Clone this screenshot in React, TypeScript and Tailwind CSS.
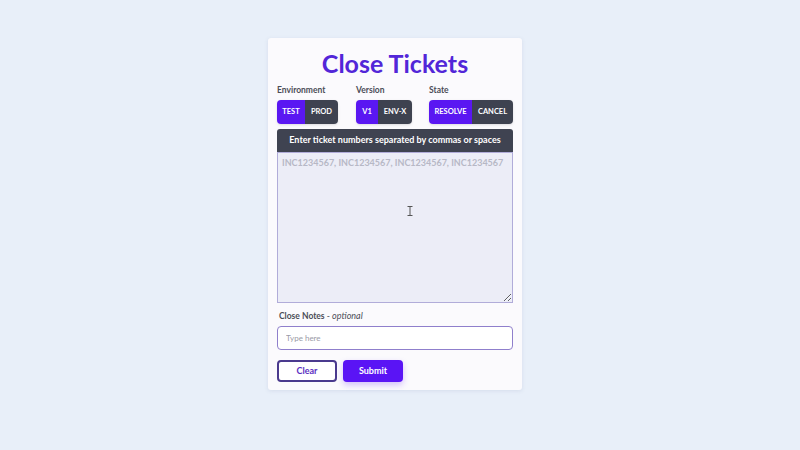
import React from "react";

type Opt = { label: string; active?: boolean; w: string };

const Toggle: React.FC<{ title: string; options: Opt[]; className?: string }> = ({
  title,
  options,
  className = "",
}) => (
  <div className={`flex flex-col ${className}`}>
    <p className="text-[8.5px] font-bold text-[#4b4d57] leading-none mb-[5px]">{title}</p>
    <div className="flex h-6 rounded-[4px] overflow-hidden shadow-sm">
      {options.map((o) => (
        <button
          key={o.label}
          className={`${o.w} ${
            o.active ? "bg-[#5a17f2]" : "bg-[#3e4250]"
          } text-white text-[7.5px] font-bold flex items-center justify-center`}
        >
          {o.label}
        </button>
      ))}
    </div>
  </div>
);

export default function App() {
  return (
    <div
      className="w-full h-[450px] bg-[#e8eff9] flex justify-center pt-[38px] pr-[10px]"
      style={{ fontFamily: "Lato, 'Open Sans', sans-serif" }}
    >
      <div className="w-[254px] h-[352px] bg-[#fbfafd] rounded-[3px] shadow-[0_1px_4px_rgba(80,90,140,0.12)] px-[9px] flex flex-col">
        <h1 className="text-center text-[25px] font-bold text-[#5226d8] leading-none mt-[13px]">
          Close Tickets
        </h1>
        <div className="flex gap-[17px] mt-[10px]">
          <Toggle
            title="Environment"
            options={[
              { label: "TEST", active: true, w: "w-[28px]" },
              { label: "PROD", w: "w-[33px]" },
            ]}
          />
          <Toggle
            title="Version"
            className="ml-[1px]"
            options={[
              { label: "V1", active: true, w: "w-[22px]" },
              { label: "ENV-X", w: "w-[34px]" },
            ]}
          />
          <Toggle
            title="State"
            options={[
              { label: "RESOLVE", active: true, w: "w-[43px]" },
              { label: "CANCEL", w: "w-[41px]" },
            ]}
          />
        </div>
        <div className="mt-[5px] flex flex-col">
          <div className="h-[23px] bg-[#3f4351] rounded-t-[3px] flex items-center justify-center text-white text-[9px] font-bold">
            Enter ticket numbers separated by commas or spaces
          </div>
          <div className="relative">
            <textarea
              className="w-full h-[151px] block resize-y bg-[#ecedf7] border border-[#b1acd9] px-[4px] py-[3px] text-[9px] font-bold text-[#555] placeholder:text-[#b7b8c6] outline-none"
              placeholder="INC1234567, INC1234567, INC1234567, INC1234567"
            />
            <svg
              className="absolute left-[130px] top-[54px]"
              width="6"
              height="10"
              viewBox="0 0 6 10"
            >
              <path
                d="M0.5 0.5h5M3 0.5v9M0.5 9.5h5"
                stroke="#555"
                strokeWidth="1"
                fill="none"
              />
            </svg>
          </div>
        </div>
        <p className="text-[8.5px] text-[#4b4d57] mt-[8px] ml-[2px] leading-none">
          <span className="font-bold">Close Notes</span> -{" "}
          <span className="italic text-[9px]">optional</span>
        </p>
        <input
          className="mt-[6px] h-6 w-full rounded-[4px] border border-[#8f7fcc] bg-white px-2 text-[8px] placeholder:text-[#9a9aa6] outline-none"
          placeholder="Type here"
        />
        <div className="flex gap-[6px] mt-[10px]">
          <button className="w-[60px] h-[22px] rounded-[4px] border-2 border-[#4a3a8e] text-[#5a2fc2] text-[9px] font-bold bg-white">
            Clear
          </button>
          <button className="w-[60px] h-[22px] rounded-[4px] bg-[#5a14f5] text-white text-[9px] font-bold shadow-[0_3px_6px_rgba(90,20,245,0.25)]">
            Submit
          </button>
        </div>
      </div>
    </div>
  );
}
